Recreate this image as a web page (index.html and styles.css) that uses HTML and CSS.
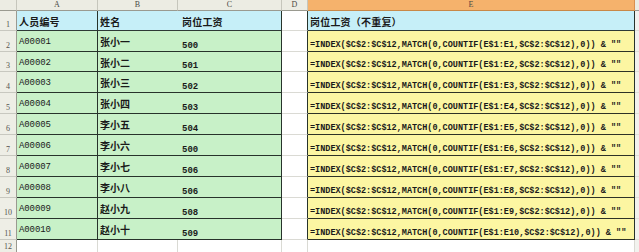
FILE: index.html
```html
<!DOCTYPE html>
<html lang="zh">
<head>
<meta charset="utf-8">
<title>岗位工资</title>
<link rel="stylesheet" href="styles.css">
</head>
<body>
<div class="sheet">
  <div class="ch corner"></div>
  <div class="ch">A</div>
  <div class="ch">B</div>
  <div class="ch">C</div>
  <div class="ch">D</div>
  <div class="ch che">E</div>
  <div class="ch chr"></div>

  <div class="rh">1</div>
  <div class="c hd ca">人员编号</div>
  <div class="c hd cb">姓名</div>
  <div class="c hd cc">岗位工资</div>
  <div class="c cd"></div>
  <div class="c hd ce">岗位工资（不重复）</div>
  <div class="c cr"></div>

  <div class="rh">2</div><div class="c g ca id">A00001</div><div class="c g cb nm">张小一</div><div class="c g cc wg">500</div><div class="c cd"></div><div class="c y ce fx">=INDEX($C$2:$C$12,MATCH(0,COUNTIF(E$1:E1,$C$2:$C$12),0)) &amp; ""</div><div class="c cr"></div>
  <div class="rh">3</div><div class="c g ca id">A00002</div><div class="c g cb nm">张小二</div><div class="c g cc wg">501</div><div class="c cd"></div><div class="c y ce fx">=INDEX($C$2:$C$12,MATCH(0,COUNTIF(E$1:E2,$C$2:$C$12),0)) &amp; ""</div><div class="c cr"></div>
  <div class="rh">4</div><div class="c g ca id">A00003</div><div class="c g cb nm">张小三</div><div class="c g cc wg">502</div><div class="c cd"></div><div class="c y ce fx">=INDEX($C$2:$C$12,MATCH(0,COUNTIF(E$1:E3,$C$2:$C$12),0)) &amp; ""</div><div class="c cr"></div>
  <div class="rh">5</div><div class="c g ca id">A00004</div><div class="c g cb nm">张小四</div><div class="c g cc wg">503</div><div class="c cd"></div><div class="c y ce fx">=INDEX($C$2:$C$12,MATCH(0,COUNTIF(E$1:E4,$C$2:$C$12),0)) &amp; ""</div><div class="c cr"></div>
  <div class="rh">6</div><div class="c g ca id">A00005</div><div class="c g cb nm">李小五</div><div class="c g cc wg">504</div><div class="c cd"></div><div class="c y ce fx">=INDEX($C$2:$C$12,MATCH(0,COUNTIF(E$1:E5,$C$2:$C$12),0)) &amp; ""</div><div class="c cr"></div>
  <div class="rh">7</div><div class="c g ca id">A00006</div><div class="c g cb nm">李小六</div><div class="c g cc wg">500</div><div class="c cd"></div><div class="c y ce fx">=INDEX($C$2:$C$12,MATCH(0,COUNTIF(E$1:E6,$C$2:$C$12),0)) &amp; ""</div><div class="c cr"></div>
  <div class="rh">8</div><div class="c g ca id">A00007</div><div class="c g cb nm">李小七</div><div class="c g cc wg">506</div><div class="c cd"></div><div class="c y ce fx">=INDEX($C$2:$C$12,MATCH(0,COUNTIF(E$1:E7,$C$2:$C$12),0)) &amp; ""</div><div class="c cr"></div>
  <div class="rh">9</div><div class="c g ca id">A00008</div><div class="c g cb nm">李小八</div><div class="c g cc wg">506</div><div class="c cd"></div><div class="c y ce fx">=INDEX($C$2:$C$12,MATCH(0,COUNTIF(E$1:E8,$C$2:$C$12),0)) &amp; ""</div><div class="c cr"></div>
  <div class="rh">10</div><div class="c g ca id">A00009</div><div class="c g cb nm">赵小九</div><div class="c g cc wg">508</div><div class="c cd"></div><div class="c y ce fx">=INDEX($C$2:$C$12,MATCH(0,COUNTIF(E$1:E9,$C$2:$C$12),0)) &amp; ""</div><div class="c cr"></div>
  <div class="rh">11</div><div class="c g ca id">A00010</div><div class="c g cb nm">赵小十</div><div class="c g cc wg">509</div><div class="c cd"></div><div class="c y ce fx">=INDEX($C$2:$C$12,MATCH(0,COUNTIF(E$1:E10,$C$2:$C$12),0)) &amp; ""</div><div class="c cr"></div>

  <div class="rh last">12</div>
  <div class="c e12 ca"></div>
  <div class="c e12 cb"></div>
  <div class="c e12 cc"></div>
  <div class="c e12 cd"></div>
  <div class="c e12 ce"></div>
  <div class="c e12 cr"></div>
</div>
</body>
</html>
```

FILE: styles.css
```css
html, body {
  margin: 0;
  padding: 0;
  background: #ffffff;
}

.sheet {
  display: grid;
  grid-template-columns: 17px 81px 80px 104px 26px 327px 4px;
  grid-template-rows: 11px 20px 21px 20px repeat(8, 21px) 12px;
  width: 639px;
  height: 252px;
  overflow: hidden;
  font-family: "Liberation Mono", "DejaVu Sans Mono", monospace;
  color: #1a1a1a;
}

.ch {
  box-sizing: border-box;
  background: #ecece3;
  border-right: 1px solid #c6c6bc;
  border-bottom: 1px solid #9a9a90;
  font-family: "Liberation Serif", serif;
  font-size: 8px;
  line-height: 10px;
  text-align: center;
  color: #4a4a44;
}

.che {
  background: #f5b26c;
  border-right-color: #d89050;
  border-bottom-color: #c88848;
}

.chr {
  border-right: none;
}

.rh {
  box-sizing: border-box;
  background: #eeeee6;
  border-right: 1px solid #9a9a90;
  border-bottom: 1px solid #c8c8c0;
  font-family: "Liberation Serif", serif;
  font-size: 8px;
  line-height: 8px;
  color: #555550;
  display: flex;
  align-items: flex-end;
  justify-content: center;
  padding-bottom: 1px;
}

.rh.last {
  border-bottom: none;
}

.c {
  box-sizing: border-box;
  display: flex;
  white-space: nowrap;
  overflow: hidden;
  border-bottom: 1px solid #d6d6d0;
}

.hd {
  background: #c6eff8;
  border-bottom: 1px solid #2e3a36;
  align-items: center;
  font-family: "Noto Sans CJK SC", sans-serif;
  font-size: 10px;
  font-weight: 700;
  letter-spacing: 0.2px;
  padding-top: 1px;
}

.g {
  background: #c8f1c8;
  border-bottom: 1px solid #27332b;
}

.y {
  background: #fcf6a2;
  border-bottom: 1px solid #2e3226;
}

.ca {
  border-right: 1px solid #27332b;
  padding-left: 2px;
}

.cb {
  padding-left: 2px;
}

.cc {
  border-right: 1px solid #27332b;
  padding-left: 4px;
}

.cd {
  background: #ffffff;
  border-right: 1px solid #27332b;
  border-bottom: 1px solid #dadad4;
}

.ce {
  border-right: 1px solid #27332b;
  padding-left: 2px;
}

.cr {
  background: #f2f2ee;
  border-bottom: 1px solid #e0e0da;
}

.hd.cc {
  padding-left: 4px;
}

.id {
  align-items: center;
  font-size: 9px;
  padding-top: 2px;
  letter-spacing: -0.1px;
}

.nm {
  align-items: center;
  font-family: "Noto Sans CJK SC", sans-serif;
  font-size: 10px;
  font-weight: 700;
  padding-top: 1px;
}

.wg {
  align-items: flex-end;
  font-size: 9px;
  font-weight: 700;
  line-height: 10px;
  padding-bottom: 0;
}

.fx {
  align-items: flex-end;
  font-size: 8.5px;
  font-weight: 700;
  line-height: 10px;
  padding-bottom: 1px;
}

.e12 {
  background: #ffffff;
  border-right: 1px solid #dadad4;
  border-bottom: none;
}

.e12.cr {
  border-right: none;
  background: #f2f2ee;
}
```
